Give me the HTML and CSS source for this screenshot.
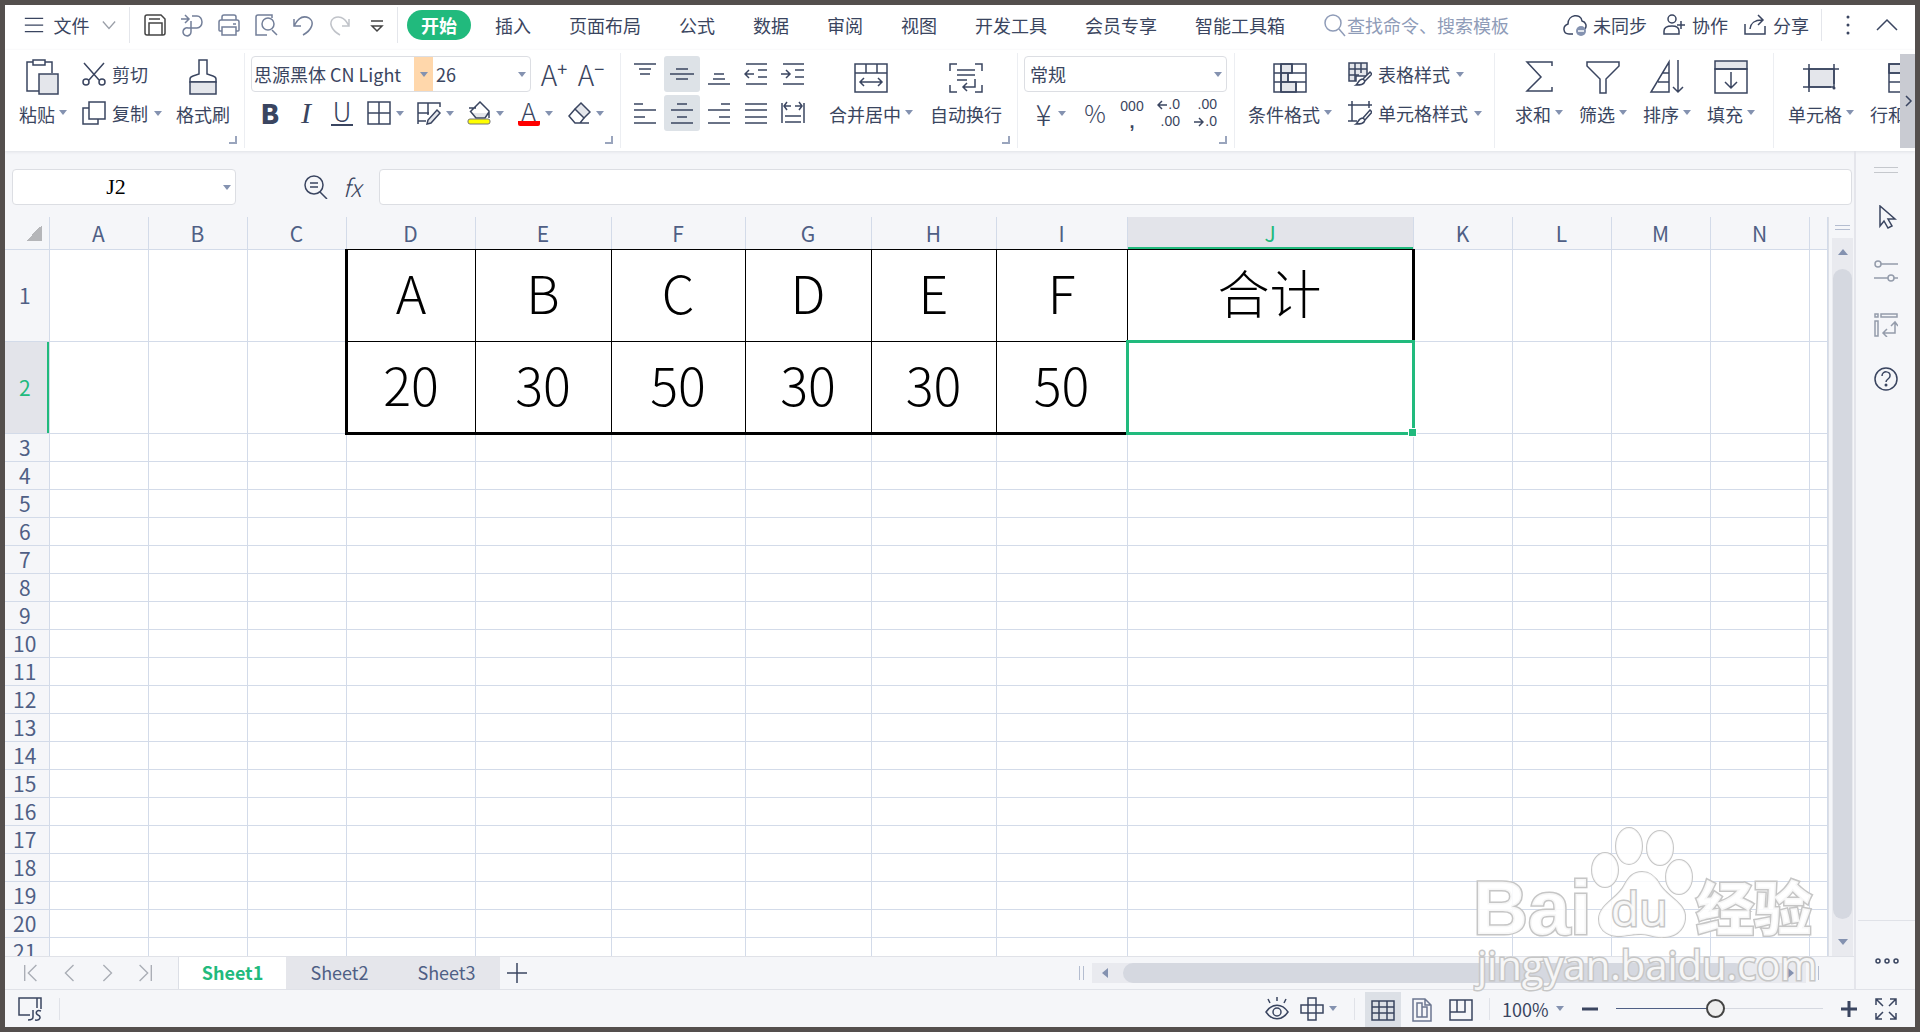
FILE: index.html
```html
<!DOCTYPE html>
<html lang="zh-CN">
<head>
    <meta charset="UTF-8">
    <title>Sheet1</title>
    <link rel="stylesheet" href="styles.css">
</head>
<body>
<div class="app">
    <header class="menubar">
        <button class="file-btn">
            <svg class="icon" viewBox="0 0 24 24"><path d="M1 4h22M1 12h22M1 20h22"/></svg>
            文件
            <svg class="icon-chevron" viewBox="0 0 16 16"><path d="M1 4l7 8 7-8"/></svg>
        </button>
        <div class="quick">
            <button aria-label="保存"><svg class="icon dark" viewBox="0 0 24 24"><path d="M2 4q0-2 2-2h14l4 4v14q0 2-2 2H4q-2 0-2-2zM6 22V10h13v12M6 6h11"/></svg></button>
            <button aria-label="输出"><svg class="icon" viewBox="0 0 24 24"><path d="M1 6h8M5 2l4 4-4 4M12 3h5a5 6 0 0 1 0 12H8a4 4 0 1 0 3 4V8"/></svg></button>
            <button aria-label="打印"><svg class="icon" viewBox="0 0 24 24"><path d="M5 7V4q0-2 2-2h10q2 0 2 2v3M5 18H3q-1 0-1-1V9q0-2 2-2h16q2 0 2 2v8q0 1-1 1h-2M5 14h14v8H5zM16 11h3"/></svg></button>
            <button aria-label="打印预览"><svg class="icon" viewBox="0 0 24 24"><path d="M13 22H2V4q0-2 2-2h14v3M18 17l5 5"/><circle cx="14" cy="11" r="6"/></svg></button>
            <button aria-label="撤销"><svg class="icon" viewBox="0 0 24 24"><path d="M3 6v7h7M3 13C8 3 14 3 18 5c6 4 3 12-6 17"/></svg></button>
            <button aria-label="恢复"><svg class="icon faded" viewBox="0 0 24 24"><path d="M21 6v7h-7M21 13C16 3 10 3 6 5c-6 4-3 12 6 17"/></svg></button>
            <button aria-label="更多"><svg class="icon dark" viewBox="0 0 24 24"><path d="M6 8h12M7 13l5 5 5-5z"/></svg></button>
        </div>
        <nav class="tabs">
            <button class="tab active">开始</button>
            <button class="tab">插入</button>
            <button class="tab">页面布局</button>
            <button class="tab">公式</button>
            <button class="tab">数据</button>
            <button class="tab">审阅</button>
            <button class="tab">视图</button>
            <button class="tab">开发工具</button>
            <button class="tab">会员专享</button>
            <button class="tab">智能工具箱</button>
        </nav>
        <label class="search">
            <svg class="icon" viewBox="0 0 24 24"><circle cx="10" cy="10" r="8"/><path d="M16 16l6 7"/></svg>
            <input type="text" placeholder="查找命令、搜索模板">
        </label>
        <div class="account">
            <button><svg class="icon" viewBox="0 0 24 24"><path d="M10 21H6C0 21-1 13 5 11 5 1 18 0 19 8c4 1 5 5 3 8"/><circle cx="18" cy="18" r="5" class="solid"/><path d="M15 18h6" class="white"/></svg>未同步</button>
            <button><svg class="icon" viewBox="0 0 24 24"><circle cx="10" cy="6" r="4"/><path d="M17 21H2v-3q0-5 8-5 7 0 7 5zM19 8v8M15 12h8"/></svg>协作</button>
            <button><svg class="icon" viewBox="0 0 24 24"><path d="M2 11v10h20v-8M7 16c1-7 5-9 12-9M15 2l5 5-5 5"/></svg>分享</button>
        </div>
        <div class="window-btns">
            <button aria-label="更多选项"><svg class="icon" viewBox="0 0 24 24"><path class="dots" d="M12 4h0M12 12h0M12 20h0"/></svg></button>
            <button aria-label="收起功能区"><svg class="icon" viewBox="0 0 24 24"><path d="M2 17L12 7l10 10"/></svg></button>
        </div>
    </header>

    <div class="ribbon">
        <div class="group group-clip">
            <button class="big">
                <svg class="icon-lg" viewBox="0 0 36 36"><path d="M14 32H2V3h6M20 3h7v11M8 1h12v5H8z"/><path class="tint" d="M14 15h19v20H14z"/></svg>
                <span>粘贴<i class="caret"></i></span>
            </button>
            <div class="rows">
                <button class="small"><svg class="icon" viewBox="0 0 24 24"><path d="M2 1l15 17M22 1L7 18"/><circle cx="4" cy="20" r="3"/><circle cx="20" cy="20" r="3"/></svg>剪切</button>
                <button class="small"><svg class="icon" viewBox="0 0 24 24"><path d="M7 7H1v16h15v-5"/><path d="M7 1h16v17H7z"/></svg>复制<i class="caret"></i></button>
            </div>
            <button class="big">
                <svg class="icon-lg" viewBox="0 0 36 36"><path d="M14 1h8v14l6 2q3 1 3 3v3H5v-3q0-2 3-3l6-2z"/><path class="tint" d="M5 23h26v12H5z"/></svg>
                <span>格式刷</span>
            </button>
            <i class="launcher"></i>
        </div>

        <div class="group group-font">
            <div class="rows">
                <div class="row">
                    <div class="combo font-combo">
                        <select class="font-name" aria-label="字体"><option>思源黑体 CN Light</option></select>
                        <span class="caret-box"><i class="caret"></i></span>
                        <select class="font-size" aria-label="字号"><option>26</option></select>
                        <i class="caret"></i>
                    </div>
                    <button class="tool" aria-label="增大字号"><span class="letter">A<sup>+</sup></span></button>
                    <button class="tool" aria-label="减小字号"><span class="letter">A<sup>−</sup></span></button>
                </div>
                <div class="row font-tools">
                    <button class="tool"><b class="letter-b">B</b></button>
                    <button class="tool"><i class="letter-i">I</i></button>
                    <button class="tool"><span class="letter-u">U</span></button>
                    <button class="tool split" aria-label="边框"><svg class="icon" viewBox="0 0 24 24"><path d="M1 1h22v22H1zM12 1v22M1 12h22"/></svg><i class="caret"></i></button>
                    <button class="tool split" aria-label="绘制边框"><svg class="icon" viewBox="0 0 24 24"><path d="M1 23V2h22v4M1 12h11M11 2v12M1 20h8"/><path class="tint" d="M20 9l3 3-9 10-4 1 1-4z"/></svg><i class="caret"></i></button>
                    <button class="tool split" aria-label="填充颜色"><svg class="icon" viewBox="0 0 24 24"><path class="tint" d="M5 12h17l-4 5H8z" stroke="none"/><path d="M2 7h7M3 11L13 1l9 9v7M4 11l5 6h9l4-6"/><rect x="1" y="18" width="22" height="5" rx="2" class="fill-yellow"/></svg><i class="caret"></i></button>
                    <button class="tool split" aria-label="字体颜色"><span class="letter-color">A</span><i class="caret"></i></button>
                    <button class="tool split" aria-label="清除"><svg class="icon" viewBox="0 0 24 24"><path class="tint" d="M14 2l9 9-6 6-9-9z"/><path d="M8 8l-6 7 6 7h5l4-5M8 22h14"/></svg><i class="caret"></i></button>
                </div>
            </div>
            <i class="launcher"></i>
        </div>

        <div class="group group-align">
            <div class="rows">
                <div class="row">
                    <button class="tool" aria-label="顶端对齐"><svg class="icon" viewBox="0 0 24 24"><path d="M1 2h22M6 7h12M7 12h10"/></svg></button>
                    <button class="tool selected" aria-label="垂直居中"><svg class="icon" viewBox="0 0 24 24"><path d="M6 7h12M0 12h24M6 17h12"/></svg></button>
                    <button class="tool" aria-label="底端对齐"><svg class="icon" viewBox="0 0 24 24"><path d="M7 12h10M6 17h12M1 22h22"/></svg></button>
                    <button class="tool" aria-label="减少缩进"><svg class="icon" viewBox="0 0 24 24"><path d="M2 2h21M14 8h9M14 15h9M2 22h21M1 12h9M5 8l-4 4 4 4"/></svg></button>
                    <button class="tool" aria-label="增加缩进"><svg class="icon" viewBox="0 0 24 24"><path d="M2 2h21M14 8h9M14 15h9M2 22h21M0 12h9M5 8l4 4-4 4"/></svg></button>
                </div>
                <div class="row">
                    <button class="tool" aria-label="左对齐"><svg class="icon" viewBox="0 0 24 24"><path d="M1 3h9M1 9h22M1 16h11M1 22h22"/></svg></button>
                    <button class="tool selected" aria-label="水平居中"><svg class="icon" viewBox="0 0 24 24"><path d="M7 3h10M1 9h22M7 16h10M1 22h22"/></svg></button>
                    <button class="tool" aria-label="右对齐"><svg class="icon" viewBox="0 0 24 24"><path d="M14 3h9M1 9h22M12 16h11M1 22h22"/></svg></button>
                    <button class="tool" aria-label="两端对齐"><svg class="icon" viewBox="0 0 24 24"><path d="M1 3h22M1 9h22M1 16h22M1 22h22"/></svg></button>
                    <button class="tool" aria-label="分散对齐"><svg class="icon" viewBox="0 0 24 24"><path d="M1 2v20M23 2v20M4 15h16M4 21h16M3 5h7M14 5h7M6 1L3 5l3 4M18 1l3 4-3 4"/></svg></button>
                </div>
            </div>
            <button class="big">
                <svg class="icon-lg" viewBox="0 0 36 36"><path d="M2 5h32v28H2zM2 14h32M13 5v9M24 5v9M7 23h22M11 19l-4 4 4 4M25 19l4 4-4 4"/></svg>
                <span>合并居中<i class="caret"></i></span>
            </button>
            <button class="big">
                <svg class="icon-lg" viewBox="0 0 36 36"><path d="M9 5H2v7M27 5h7v7M9 33H2v-7M27 33h7v-7M9 11h18M9 16h18M9 21h10M27 20v8H15M19 24l-4 4 4 4"/></svg>
                <span>自动换行</span>
            </button>
            <i class="launcher"></i>
        </div>

        <div class="group">
            <div class="rows">
                <div class="combo number-combo">
                    <select aria-label="数字格式"><option>常规</option></select>
                    <i class="caret"></i>
                </div>
                <div class="row number-tools">
                    <button class="tool split"><span class="sign">¥</span><i class="caret"></i></button>
                    <button class="tool"><span class="sign-small">%</span></button>
                    <button class="tool thousands">000<b>,</b></button>
                    <button class="tool decimals" aria-label="增加小数位"><span><svg viewBox="0 0 10 10"><path d="M10 5H1M5 1L1 5l4 4"/></svg>.0</span><span>.00</span></button>
                    <button class="tool decimals" aria-label="减少小数位"><span>.00</span><span><svg viewBox="0 0 10 10"><path d="M0 5h9M5 1l4 4-4 4"/></svg>.0</span></button>
                </div>
            </div>
            <i class="launcher"></i>
        </div>

        <div class="group group-styles">
            <button class="big">
                <svg class="icon-lg" viewBox="0 0 36 36"><path class="tint" d="M9 5h11v9H9zM9 14h7v9H9zM9 23h15v10H9z"/><path d="M2 5h32v28H2zM2 14h32M2 23h32M9 5v28M20 5v9M16 14v9M24 23v10"/></svg>
                <span>条件格式<i class="caret"></i></span>
            </button>
            <div class="rows">
                <button class="small"><svg class="icon" viewBox="0 0 24 24"><path class="tint" d="M1 1h18v13H8v5H1z"/><path d="M1 7h18M1 13h10M7 1v18M13 1v10"/><path class="paper" d="M22 10l2 2-7 7-2-2zM15 17l2 2c-1 4-5 4-9 4 3-2 2-6 7-6z"/></svg>表格样式<i class="caret"></i></button>
                <button class="small"><svg class="icon" viewBox="0 0 24 24"><path d="M4 0v20h5M0 4h24M21 0v7M0 20h4"/><path class="paper" d="M22 9l2 2-7 8-2-2zM15 17l2 2c-1 4-5 4-9 4 3-2 2-6 7-6z"/></svg>单元格样式<i class="caret"></i></button>
            </div>
        </div>

        <div class="group group-edit">
            <button class="big">
                <svg class="icon-lg" viewBox="0 0 36 36"><path d="M31 7V3H6l14 15L6 32h25v-4"/></svg>
                <span>求和<i class="caret"></i></span>
            </button>
            <button class="big">
                <svg class="icon-lg" viewBox="0 0 36 36"><path d="M2 3h32v4L21 20v14h-6V20L2 7z"/></svg>
                <span>筛选<i class="caret"></i></span>
            </button>
            <button class="big">
                <svg class="icon-lg" viewBox="0 0 36 36"><path d="M20 3v30H2zM14 14h6M9 23h11M29 1v32M24 28l5 5 5-5"/></svg>
                <span>排序<i class="caret"></i></span>
            </button>
            <button class="big">
                <svg class="icon-lg" viewBox="0 0 36 36"><path class="tint" d="M2 2h32v8H2z"/><path d="M2 10h32v24H2zM18 13v16M12 23l6 6 6-6"/></svg>
                <span>填充<i class="caret"></i></span>
            </button>
        </div>

        <div class="group group-cells">
            <button class="big">
                <svg class="icon-lg" viewBox="0 0 36 36"><path class="tint" d="M6 10h25v18H6z"/><path d="M0 10h36M0 28h28M6 5v28M31 5v20"/><path class="dots" d="M31 29h0"/></svg>
                <span>单元格<i class="caret"></i></span>
            </button>
            <button class="big">
                <svg class="icon-lg" viewBox="0 0 36 36"><path class="tint" d="M4 5h12v9H4z"/><path d="M4 5h12v28H4zM4 14h12M4 23h12M20 5h14v28H20z"/></svg>
                <span>行和列<i class="caret"></i></span>
            </button>
        </div>
        <button class="ribbon-next" aria-label="更多功能"><svg viewBox="0 0 12 12"><path d="M4 1l5 5-5 5"/></svg></button>
    </div>

    <main class="main">
        <section class="workspace">
            <div class="formula-bar">
                <div class="combo name-box">
                    <input type="text" value="J2" aria-label="名称框">
                    <i class="caret"></i>
                </div>
                <button class="lookup" aria-label="浏览公式"><svg class="icon" viewBox="0 0 24 24"><circle cx="10" cy="10" r="9"/><path d="M16 17l7 7M6 8h8M6 12h8"/></svg></button>
                <label class="fx" for="formula">fx</label>
                <input type="text" id="formula" class="formula-input">
            </div>
            <div class="sheet-area">
                <div class="sheet">
                    <table class="grid">
                        <colgroup>
                            <col class="w-head"><col class="w-std"><col class="w-std"><col class="w-std">
                            <col class="w-d"><col class="w-e"><col class="w-f"><col class="w-g"><col class="w-h"><col class="w-i"><col class="w-j">
                            <col class="w-std"><col class="w-std"><col class="w-std"><col class="w-std"><col>
                        </colgroup>
                        <thead>
                            <tr>
                                <th><span class="select-all"></span></th>
                                <th>A</th><th>B</th><th>C</th>
                                <th class="over-data">D</th><th class="over-data">E</th><th class="over-data">F</th><th class="over-data">G</th><th class="over-data">H</th><th class="over-data">I</th>
                                <th class="over-data current">J</th>
                                <th>K</th><th>L</th><th>M</th><th>N</th><th></th>
                            </tr>
                        </thead>
                        <tbody id="grid-body">
                            <tr class="tall">
                                <th>1</th><td></td><td></td><td></td>
                                <td class="data first">A</td><td class="data">B</td><td class="data">C</td><td class="data">D</td><td class="data">E</td><td class="data">F</td><td class="data last">合计</td>
                                <td></td><td></td><td></td><td></td><td></td>
                            </tr>
                            <tr class="tall">
                                <th class="current">2</th><td></td><td></td><td></td>
                                <td class="data first bottom">20</td><td class="data bottom">30</td><td class="data bottom">50</td><td class="data bottom">30</td><td class="data bottom">30</td><td class="data bottom">50</td>
                                <td><span class="selection"></span></td>
                                <td></td><td></td><td></td><td></td><td></td>
                            </tr>
                        </tbody>
                    </table>
                </div>
                <div class="v-scroll">
                    <span class="split-handle"></span>
                    <div class="v-track">
                        <button class="arrow up" aria-label="向上滚动"></button>
                        <span class="v-thumb"></span>
                        <button class="arrow down" aria-label="向下滚动"></button>
                    </div>
                </div>
            </div>
            <div class="sheet-bar">
                <div class="sheet-nav">
                    <button aria-label="第一张"><svg viewBox="0 0 20 20"><path d="M3 1v18M16 1l-9 9 9 9"/></svg></button>
                    <button aria-label="上一张"><svg viewBox="0 0 20 20"><path d="M15 1l-9 9 9 9"/></svg></button>
                    <button aria-label="下一张"><svg viewBox="0 0 20 20"><path d="M6 1l9 9-9 9"/></svg></button>
                    <button aria-label="最后一张"><svg viewBox="0 0 20 20"><path d="M17 1v18M4 1l9 9-9 9"/></svg></button>
                </div>
                <button class="sheet-tab active">Sheet1</button>
                <button class="sheet-tab">Sheet2</button>
                <button class="sheet-tab">Sheet3</button>
                <button class="add-sheet" aria-label="新建工作表"><svg viewBox="0 0 20 20"><path d="M10 0v20M0 10h20"/></svg></button>
                <div class="h-scroll">
                    <span class="grip"></span>
                    <div class="h-track">
                        <button class="arrow left" aria-label="向左滚动"></button>
                        <span class="h-thumb"></span>
                        <button class="arrow right" aria-label="向右滚动"></button>
                    </div>
                    <span class="grip"></span>
                </div>
            </div>
        </section>
        <aside class="side-panel">
            <span class="panel-handle"></span>
            <button aria-label="选择"><svg class="icon" viewBox="0 0 24 24"><path d="M6 1v20l4-5 4 7 4-2-4-7h7z"/></svg></button>
            <button aria-label="属性"><svg class="icon muted" viewBox="0 0 24 24"><circle cx="4" cy="5" r="3"/><path d="M7 5h17M0 19h14M20 19h4"/><circle cx="17" cy="19" r="3"/></svg></button>
            <button aria-label="转换"><svg class="icon muted" viewBox="0 0 24 24"><path d="M1 1h3v3H1zM7 1h16v3H7zM1 8h3v15H1zM21 9v11H9M17 13l4-4 3 4M13 16l-4 4 4 4"/></svg></button>
            <button aria-label="帮助"><svg class="icon" viewBox="0 0 24 24"><circle cx="12" cy="12" r="11"/><path d="M8 9c0-6 9-5 8 0 0 3-4 3-4 6"/><path class="dots" d="M12 18h0"/></svg></button>
            <div class="panel-more">
                <button aria-label="更多"><svg class="icon" viewBox="0 0 24 24"><circle cx="3" cy="12" r="2"/><circle cx="12" cy="12" r="2"/><circle cx="21" cy="12" r="2"/></svg></button>
            </div>
        </aside>
    </main>

    <footer class="statusbar">
        <button class="script-btn" aria-label="JS 宏"><svg class="icon" viewBox="0 0 24 24"><path d="M12 18H1V1h20M19 11V1h4v11M15 13v7q0 3-5 3M23 14c-5-2-6 3-3 4s3 6-3 5"/></svg></button>
        <div class="status-tools">
            <button class="status-btn" aria-label="护眼模式"><svg class="icon" viewBox="0 0 24 24"><path d="M1 15c6-9 16-9 22 0-6 9-16 9-22 0zM12 0v4M3 2l2 4M21 2l-2 4"/><circle cx="12" cy="15" r="4"/></svg></button>
            <button class="status-btn split" aria-label="阅读模式"><svg class="icon" viewBox="0 0 24 24"><path d="M8 1h8v22H8zM1 8h22v8H1z"/></svg><i class="caret"></i></button>
        </div>
        <div class="views">
            <button class="status-btn selected" aria-label="普通视图"><svg class="icon" viewBox="0 0 24 24"><path d="M1 3h22v19H1zM1 9h22M1 15h22M8 3v19M16 3v19"/></svg></button>
            <button class="status-btn" aria-label="分页预览"><svg class="icon muted-dark" viewBox="0 0 24 24"><path d="M3 1h12l6 6v16H3zM15 1v6h6M7 5h5v14H7zM12 9h5v10h-5"/></svg></button>
            <button class="status-btn" aria-label="页面布局"><svg class="icon" viewBox="0 0 24 24"><path d="M1 2h22v20H1zM1 14h15V2M8 2v12"/></svg></button>
        </div>
        <div class="zoom">
            <select class="zoom-select" aria-label="缩放比例"><option>100%</option></select>
            <i class="caret"></i>
            <button class="zoom-btn" aria-label="缩小"><svg viewBox="0 0 16 16"><path d="M0 8h16"/></svg></button>
            <input type="range" class="zoom-range" min="0" max="100" value="48" aria-label="缩放">
            <button class="zoom-btn" aria-label="放大"><svg viewBox="0 0 16 16"><path d="M0 8h16M8 0v16"/></svg></button>
            <button class="fullscreen" aria-label="全屏"><svg class="icon" viewBox="0 0 24 24"><path d="M9 9L2 2M2 8V2h6M15 9l7-7M16 2h6v6M9 15l-7 7M2 16v6h6M15 15l7 7M22 16v6h-6"/></svg></button>
        </div>
    </footer>

    <svg class="watermark" viewBox="0 0 350 172">
        <text class="mark" x="0" y="110" font-size="76">Bai</text>
        <ellipse cx="132" cy="46" rx="13" ry="17"/>
        <ellipse cx="156" cy="22" rx="13" ry="18"/>
        <ellipse cx="187" cy="24" rx="13" ry="17"/>
        <ellipse cx="206" cy="53" rx="13" ry="17"/>
        <path d="M169 48c-9 0-13 5-18 14-6 12-25 19-25 33 0 13 12 18 22 17 9-1 12-2 20-2s14 4 24 3c14-1 21-11 20-22-1-12-18-19-25-30-5-9-10-13-18-13z"/>
        <text class="mark-url" x="138" y="102" font-size="46">du</text>
        <text class="mark-cn" x="223" y="106" font-size="58">经验</text>
        <text class="mark-url" x="4" y="156" font-size="40">jingyan.baidu.com</text>
    </svg>
</div>
<script src="script.js"></script>
</body>
</html>
```
FILE: styles.css
```css
* {
    box-sizing: border-box;
}
body {
    margin: 0;
    font-family: "Noto Sans CJK SC", sans-serif;
    font-size: 18px;
    line-height: 24px;
    color: #3a4560;
}
button, input, select {
    font: inherit;
    color: inherit;
    background: none;
    border: 0;
    padding: 0;
    margin: 0;
    outline: 0;
}
select {
    appearance: none;
}
button {
    display: flex;
    align-items: center;
    justify-content: center;
    flex-shrink: 0;
    white-space: nowrap;
}
svg {
    display: block;
    flex-shrink: 0;
    fill: none;
    stroke: #3a4560;
    stroke-width: 1.5;
}
.icon {
    width: 24px;
    height: 24px;
}
.icon-lg {
    width: 36px;
    height: 36px;
}
.tint {
    fill: #e4e6eb;
}
.paper {
    fill: #fff;
}
.dots {
    stroke-width: 3;
    stroke-linecap: round;
}
.muted {
    stroke: #949cab;
}
.muted-dark {
    stroke: #6b7690;
}
.app {
    position: relative;
    display: flex;
    flex-direction: column;
    height: 100vh;
    border: 5px solid #544f4d;
    background-color: #f5f6f9;
    overflow: hidden;
}
.caret {
    width: 0;
    height: 0;
    flex-shrink: 0;
    border: 4px solid transparent;
    border-top: 5px solid #8492b0;
    border-bottom: 0;
}

/* menu bar */
.menubar {
    display: flex;
    align-items: center;
    height: 45px;
    padding-bottom: 6px;
    background-color: #fff;
    flex-shrink: 0;
}
.file-btn {
    gap: 8px;
    width: 125px;
    padding-left: 3px;
    height: 36px;
    border-right: 1px solid #e4e6eb;
}
.file-btn .icon {
    height: 20px;
}
.icon-chevron {
    width: 14px;
    height: 14px;
    margin-left: 4px;
    stroke: #9a9fa8;
}
.quick {
    display: flex;
    gap: 13px;
    width: 268px;
    padding-left: 13px;
    height: 36px;
    border-right: 1px solid #e4e6eb;
}
.quick svg {
    stroke: #737f99;
}
.quick .dark {
    stroke: #444;
}
.quick .faded {
    stroke: #c0c3c9;
}
.tabs {
    display: flex;
    align-items: center;
    gap: 10px;
    padding-left: 9px;
}
.tab {
    height: 30px;
    padding: 0 14px;
}
.tab.active {
    background-color: #21ba7d;
    color: #fff;
    font-weight: bold;
    border-radius: 15px;
}
.search {
    display: flex;
    align-items: center;
    margin-left: 24px;
    flex: 1;
    min-width: 0;
}
.search svg {
    stroke: #8f9cb8;
}
.search input {
    width: 180px;
}
.search input::placeholder {
    color: #8f9cb8;
    opacity: 1;
}
.account {
    display: flex;
    gap: 15px;
    padding-right: 12px;
}
.account button {
    gap: 6px;
}
.account .solid {
    fill: #8492b0;
    stroke: none;
}
.account .white {
    stroke: #fff;
}
.window-btns {
    display: flex;
    gap: 15px;
    padding: 4px 16px 4px 14px;
    border-left: 1px solid #e4e6eb;
}

/* ribbon */
.ribbon {
    display: flex;
    position: relative;
    height: 101px;
    background-color: #fff;
    box-shadow: 0 1px 3px #dfe1e6;
    z-index: 1;
    flex-shrink: 0;
    overflow: hidden;
}
.group {
    display: flex;
    position: relative;
    align-items: flex-start;
    margin-top: 3px;
    margin-bottom: 3px;
    padding: 3px 7px 0 6px;
    border-right: 1px solid #eceef2;
    flex-shrink: 0;
}
.launcher {
    position: absolute;
    right: 7px;
    bottom: 4px;
    width: 8px;
    height: 8px;
    border-right: 2px solid #9aa5bd;
    border-bottom: 2px solid #9aa5bd;
}
.rows {
    display: flex;
    flex-direction: column;
    gap: 3px;
}
.row {
    display: flex;
    gap: 1px;
}
.big {
    flex-direction: column;
    gap: 1px;
    padding: 3px 4px 0;
}
.big span {
    display: flex;
    align-items: center;
    gap: 4px;
    height: 36px;
}
.big .caret {
    margin-bottom: 4px;
}
.small {
    justify-content: flex-start;
    gap: 6px;
    height: 36px;
}
.tool {
    width: 36px;
    height: 36px;
    border-radius: 3px;
}
.tool.selected {
    background-color: #dde2e7;
}
.split {
    width: 50px;
    gap: 5px;
}
.group-clip {
    width: 240px;
    padding-left: 10px;
}
.group-clip .rows {
    margin: 0 10px 0 11px;
}
.group-font {
    width: 376px;
}
.combo {
    display: flex;
    align-items: center;
    height: 36px;
    border: 1px solid #dcdee3;
    border-radius: 4px;
    background-color: #fff;
}
.font-combo {
    width: 280px;
    padding-right: 4px;
    margin-right: 4px;
}
.font-name {
    width: 162px;
    padding-left: 2px;
}
.caret-box {
    display: flex;
    align-items: center;
    justify-content: center;
    width: 19px;
    height: 34px;
    background-color: #ffd7ab;
}
.font-size {
    flex: 1;
    min-width: 0;
    padding-left: 3px;
}
.letter {
    font-size: 28px;
    font-weight: 300;
}
.letter sup {
    font-size: 18px;
    font-weight: normal;
    line-height: 0;
    vertical-align: 10px;
}
.font-tools {
    gap: 0;
    padding-left: 1px;
}
.letter-b {
    font-size: 27px;
    font-weight: 900;
}
.letter-i {
    font-family: "Liberation Serif", serif;
    font-size: 30px;
}
.letter-u {
    width: 22px;
    height: 25px;
    border-bottom: 2px solid #3a4560;
    font-size: 27px;
    font-weight: 300;
    line-height: 20px;
}
.letter-color {
    width: 22px;
    height: 26px;
    border-bottom: 5px solid #f00;
    border-radius: 2px;
    font-size: 25px;
    font-weight: 300;
    line-height: 20px;
}
.fill-yellow {
    fill: #ff0;
    stroke: #777;
    stroke-width: 1;
}
.group-align .rows {
    margin-right: 14px;
}
.group-align {
    width: 397px;
}
.group-align .big + .big {
    margin-left: 9px;
}
.number-combo {
    width: 203px;
    padding: 0 4px 0 5px;
}
.number-combo select {
    flex: 1;
}
.number-tools {
    padding-left: 2px;
}
.number-tools .split {
    gap: 7px;
}
.sign {
    font-size: 29px;
    font-weight: 300;
}
.sign-small {
    font-size: 24px;
    font-weight: 300;
}
.thousands, .decimals {
    flex-direction: column;
    font-family: "Liberation Sans", sans-serif;
    font-size: 14px;
    line-height: 17px;
}
.thousands b {
    font-size: 18px;
    line-height: 14px;
}
.decimals {
    align-items: flex-end;
    padding-right: 7px;
}
.decimals span {
    display: flex;
    align-items: center;
    gap: 1px;
}
.decimals svg {
    width: 10px;
    height: 10px;
}
.group-styles {
    width: 260px;
    padding-left: 9px;
}
.group-styles .rows {
    margin-left: 12px;
}
.group-edit {
    width: 279px;
    padding-left: 17px;
}
.group-edit .big {
    width: 54px;
    margin-right: 10px;
}
.group-cells {
    padding-left: 10px;
}
.group-cells .big + .big {
    margin-left: 8px;
}
.ribbon-next {
    position: absolute;
    right: 0;
    top: 4px;
    bottom: 3px;
    width: 15px;
    background-color: #c9cbd2;
}
.ribbon-next svg {
    width: 12px;
    height: 12px;
}

/* formula bar */
.main {
    display: flex;
    flex: 1;
    min-height: 0;
}
.workspace {
    display: flex;
    flex-direction: column;
    flex: 1;
    min-width: 0;
}
.formula-bar {
    display: flex;
    align-items: center;
    padding: 18px 2px 12px 7px;
    flex-shrink: 0;
}
.name-box {
    width: 224px;
    padding-right: 4px;
    margin-right: 68px;
}
.name-box input {
    flex: 1;
    min-width: 0;
    padding-right: 4px;
    text-align: center;
    font-family: "Liberation Serif", serif;
    font-size: 22px;
    color: #000;
}
.fx {
    width: 51px;
    padding-left: 15px;
    font-size: 24px;
    font-style: italic;
    font-weight: 300;
}
.formula-input {
    flex: 1;
    height: 36px;
    padding: 0 8px;
    border: 1px solid #dcdee3;
    border-radius: 4px;
    background-color: #fff;
}

/* grid */
.sheet-area {
    display: flex;
    flex: 1;
    min-height: 0;
}
.sheet {
    flex: 1;
    min-width: 0;
    overflow: hidden;
    background-color: #fff;
    border-right: 1px solid #dcdfe6;
}
.grid {
    width: 100%;
    table-layout: fixed;
    border-collapse: collapse;
}
.grid tr {
    height: 28px;
}
.grid thead tr {
    height: 32px;
}
.grid .tall {
    height: 92px;
}
.grid th, .grid td {
    padding: 0;
    border: 1px solid #d3dbe9;
}
.grid th {
    background-color: #f5f6f9;
    color: #4f5f85;
    font-size: 21px;
    font-weight: normal;
    border-left: 0;
}
.grid thead th {
    border-top: 0;
}
.grid thead .over-data {
    border-bottom-color: #000;
}
.grid td {
    position: relative;
}
.grid tbody th {
    padding-right: 4px;
}
.grid th.current {
    background-color: #e3e4ea;
    color: #21ba7d;
}
.grid thead th.current {
    box-shadow: inset 0 -2px #21ba7d;
}
.grid tbody th.current {
    box-shadow: inset -2px 0 #21ba7d;
}
.grid .data {
    padding-bottom: 6px;
    border: 1px solid #000;
    color: #000;
    text-align: center;
    font-size: 52px;
    font-weight: 300;
    line-height: 60px;
}
.grid .first {
    border-left: 3px solid #000;
}
.grid .last {
    border-right: 3px solid #000;
}
.grid .bottom {
    border-bottom: 3px solid #000;
}
.select-all {
    display: block;
    width: 16px;
    height: 16px;
    margin-left: 21px;
    background: linear-gradient(135deg, transparent 50%, #b5b6b9 50%);
}
.selection {
    position: absolute;
    inset: -2px;
    border: 3px solid #21ba7d;
}
.selection::after {
    content: "";
    position: absolute;
    right: -5px;
    bottom: -5px;
    width: 7px;
    height: 7px;
    border: 1px solid #fff;
    background-color: #21ba7d;
}
.w-head { width: 44px; }
.w-std { width: 99px; }
.w-d { width: 129px; }
.w-e { width: 136px; }
.w-f { width: 134px; }
.w-g { width: 126px; }
.w-h { width: 125px; }
.w-i { width: 131px; }
.w-j { width: 286px; }

/* scroll bars */
.v-scroll {
    display: flex;
    flex-direction: column;
    width: 25px;
    padding: 0 1px 0 3px;
}
.split-handle {
    height: 5px;
    margin: 8px 3px;
    border-top: 1px solid #b4bdd0;
    border-bottom: 1px solid #b4bdd0;
}
.v-track {
    display: flex;
    flex-direction: column;
    flex: 1;
    align-items: center;
    background-color: #e9eaef;
}
.v-thumb {
    flex: 1;
    width: 19px;
    border-radius: 10px;
    background-color: #d5d8e0;
}
.arrow::before {
    content: "";
    border: 5px solid transparent;
}
.v-track .arrow {
    height: 31px;
    padding-bottom: 4px;
}
.v-track .down {
    height: 37px;
    padding: 8px 0 0;
}
.up::before {
    border-top: 0;
    border-bottom: 6px solid #8492b0;
}
.down::before {
    border-bottom: 0;
    border-top: 6px solid #8492b0;
}
.left::before {
    border-left: 0;
    border-right: 6px solid #8492b0;
}
.right::before {
    border-right: 0;
    border-left: 6px solid #8492b0;
}
.h-track .left {
    padding-right: 6px;
}

/* sheet tabs */
.sheet-bar {
    display: flex;
    height: 34px;
    border-top: 1px solid #e0e2e8;
    border-bottom: 1px solid #e0e2e8;
    flex-shrink: 0;
}
.sheet-nav {
    display: flex;
    width: 174px;
    padding-left: 7px;
    border-right: 1px solid #dcdfe6;
}
.sheet-nav button {
    width: 38px;
}
.sheet-nav svg {
    width: 20px;
    height: 18px;
    stroke: #a9adb5;
}
.sheet-tab {
    width: 107px;
    padding-bottom: 2px;
    background-color: #e5e6eb;
    color: #4f5f85;
}
.sheet-tab.active {
    background-color: #fff;
    color: #21ba7d;
    font-weight: bold;
}
.add-sheet {
    width: 34px;
}
.add-sheet svg {
    width: 20px;
    height: 20px;
}
.h-scroll {
    display: flex;
    align-items: center;
    gap: 8px;
    width: 740px;
    margin-left: auto;
    margin-right: 35px;
}
.grip {
    width: 5px;
    height: 14px;
    border-left: 1px solid #b4bdd0;
    border-right: 1px solid #b4bdd0;
}
.h-track {
    display: flex;
    flex: 1;
    height: 20px;
    background-color: #e9eaef;
}
.h-track .arrow {
    width: 31px;
}
.h-thumb {
    flex: 1;
    margin-right: 30px;
    border-radius: 10px;
    background-color: #d5d8e0;
}

/* right panel */
.side-panel {
    display: flex;
    flex-direction: column;
    align-items: center;
    width: 61px;
    padding-top: 16px;
    border-left: 2px solid #e4e5eb;
    border-bottom: 1px solid #e0e2e8;
}
.panel-handle {
    width: 24px;
    height: 6px;
    margin-bottom: 17px;
    border-top: 1px solid #c5c8cd;
    border-bottom: 1px solid #c5c8cd;
    flex-shrink: 0;
}
.side-panel > button {
    width: 40px;
    height: 54px;
}
.panel-more {
    display: flex;
    justify-content: center;
    align-self: stretch;
    height: 69px;
    padding-top: 12px;
    margin-top: auto;
    margin-left: 2px;
    border-top: 1px solid #e0e2e8;
}

/* status bar */
.statusbar {
    display: flex;
    align-items: center;
    height: 37px;
    flex-shrink: 0;
}
.script-btn {
    height: 22px;
    padding: 0 17px 0 13px;
    border-right: 1px solid #e0e2e8;
}
.status-tools {
    display: flex;
    margin-left: auto;
    border-right: 1px solid #e0e2e8;
    padding-right: 12px;
    height: 22px;
    align-items: center;
}
.status-btn {
    width: 36px;
    height: 35px;
}
.status-btn.split {
    width: 47px;
}
.status-btn.selected {
    background-color: #dce0e6;
}
.views {
    display: flex;
    gap: 3px;
    padding: 2px 0 0 10px;
}
.zoom {
    display: flex;
    align-items: center;
    padding: 0 17px 0 12px;
    margin-left: 10px;
    border-left: 1px solid #e0e2e8;
    height: 22px;
}
.zoom-select {
    width: 54px;
}
.zoom-btn {
    margin: 0 18px;
}
.zoom-btn + .fullscreen {
    margin-left: -1px;
}
.zoom-btn svg {
    width: 16px;
    height: 16px;
    stroke-width: 3;
}
.zoom-range {
    appearance: none;
    width: 207px;
    height: 20px;
    background: linear-gradient(to right, #4f5f85 48%, #d5d8e0 48%) center / 100% 1px no-repeat;
}
.zoom-range::-webkit-slider-thumb {
    appearance: none;
    width: 19px;
    height: 19px;
    border: 2px solid #444;
    border-radius: 50%;
    background-color: #eee;
}

/* logo over the bottom right corner */
.watermark {
    position: absolute;
    right: 92px;
    bottom: 31px;
    width: 350px;
    height: 172px;
    z-index: 2;
    pointer-events: none;
    fill: rgba(255, 255, 255, 0.85);
    stroke: #c6c6c6;
    stroke-width: 2;
    paint-order: stroke;
}
.mark {
    font-family: "Liberation Sans", sans-serif;
    font-weight: bold;
    stroke-width: 3;
}
.mark-cn {
    font-family: "Noto Sans CJK SC", sans-serif;
    font-weight: 900;
    stroke-width: 3;
}
.mark-url {
    font-family: "Open Sans", sans-serif;
    stroke-width: 3;
}
```
FILE: script.js
```js
var body = document.getElementById('grid-body');

// empty rows under the data, one cell for each column of the header
for (var row = 3; row <= 21; row++) {
    body.insertAdjacentHTML('beforeend', `<tr><th>${row}</th>${'<td></td>'.repeat(15)}</tr>`);
}
```
